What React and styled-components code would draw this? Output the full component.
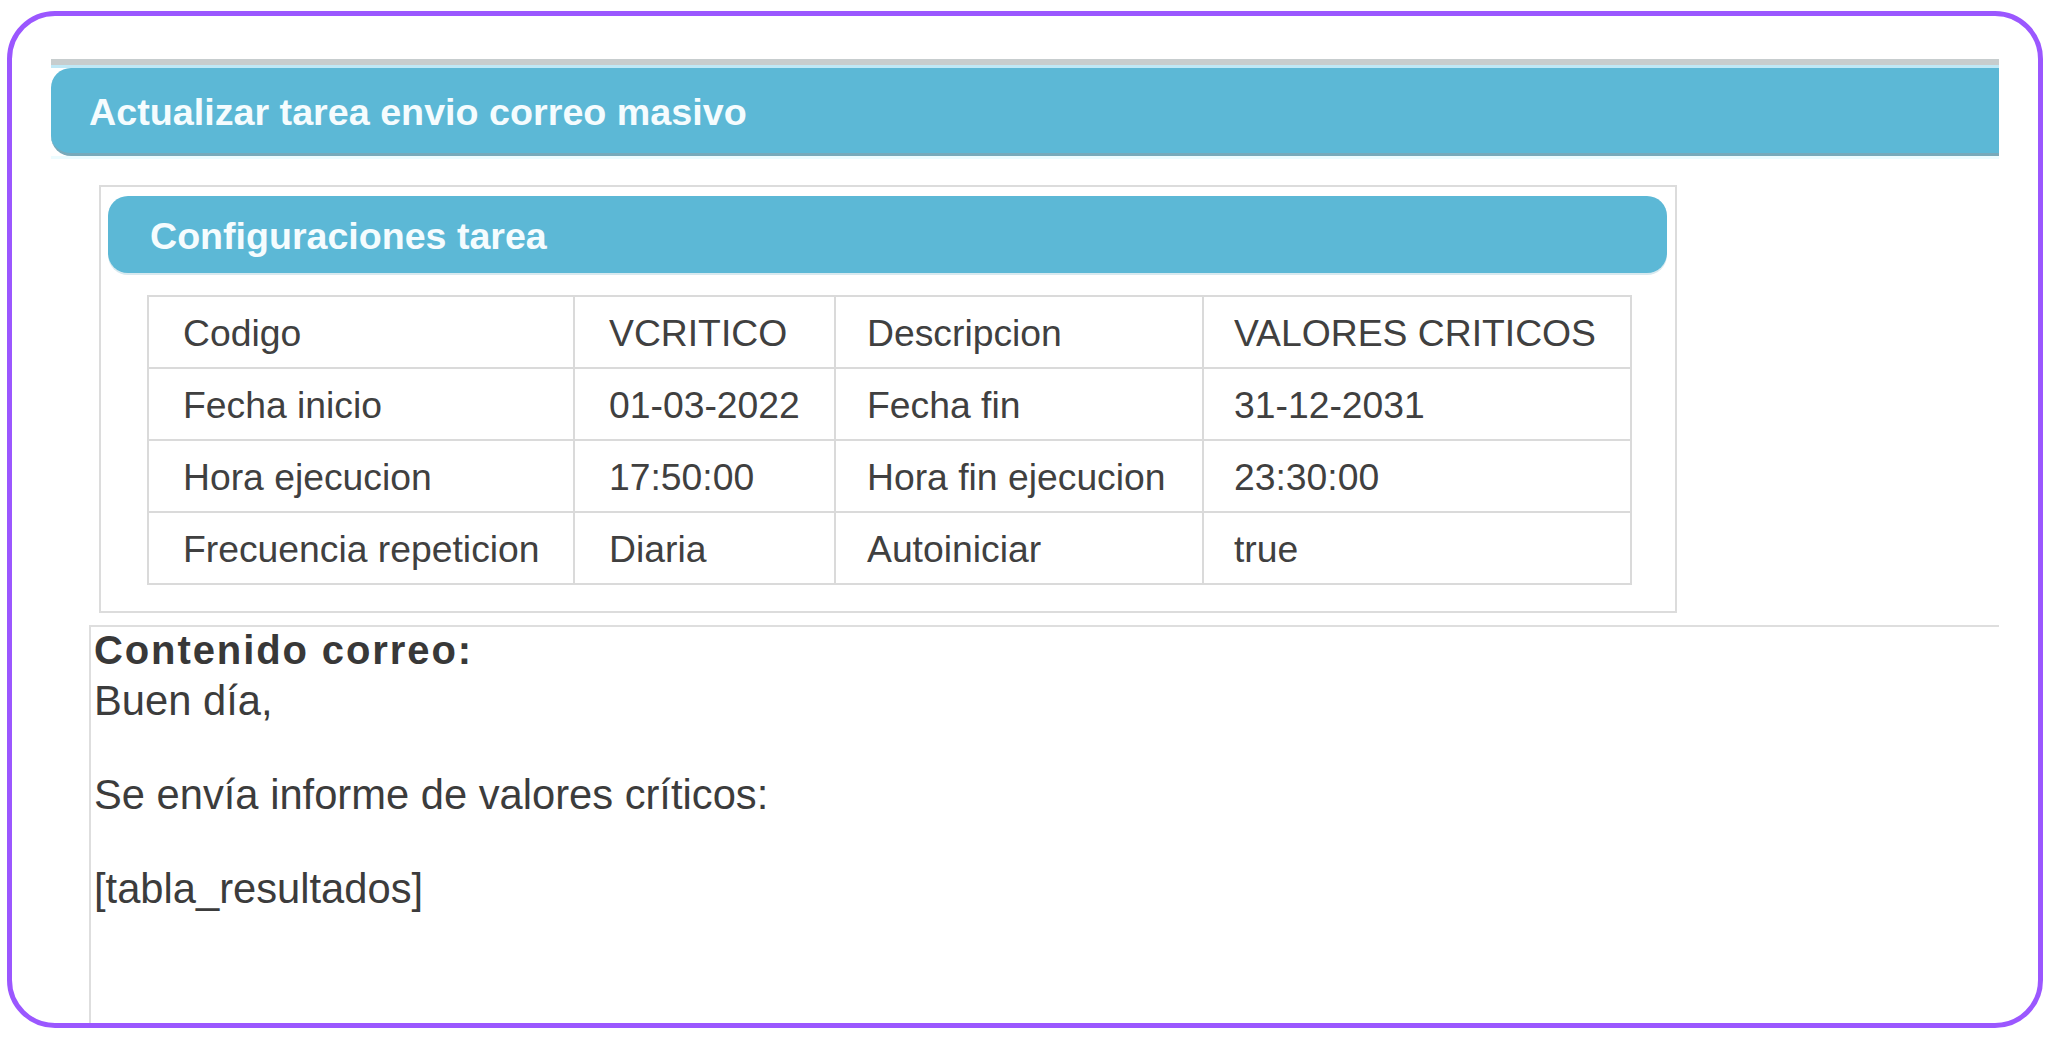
import React from "react";
import styled, { createGlobalStyle } from "styled-components";

const GlobalStyle = createGlobalStyle`
  html, body {
    margin: 0;
    padding: 0;
    background: #ffffff;
  }
  body {
    font-family: "Liberation Sans", Arial, sans-serif;
  }
  * { box-sizing: border-box; }
`;

const Frame = styled.div`
  margin: 11px 0 0 7px;
  width: 2036px;
  height: 1017px;
  border: 5px solid #9b57ff;
  border-radius: 48px;
  overflow: hidden;
  background: #fff;
  padding: 43px 39px 0 39px;
  display: flex;
  flex-direction: column;
`;

const HeaderWrap = styled.div`
  border-top: 6px solid #c7cdce;
  box-shadow: 0 3px 0 #ecfcff;
`;

const HeaderGlow = styled.div`
  height: 3px;
  background: #bfe8f6;
`;

const Header = styled.div`
  height: 88px;
  background: #5cb8d6;
  border-bottom: 3px solid #78a9ba;
  border-radius: 20px 0 0 20px;
  display: flex;
  align-items: center;
  padding-left: 38px;
  padding-top: 4px;
`;

const HeaderTitle = styled.h1`
  margin: 0;
  font-size: 37.7px;
  font-weight: bold;
  color: #f5fcfe;
`;

const Panel = styled.section`
  margin: 29px 0 0 48px;
  width: 1578px;
  border: 2px solid #dcdcdc;
  padding: 9px 8px 26px 7px;
`;

const PanelHeader = styled.div`
  height: 77px;
  background: #5cb8d6;
  border-radius: 20px;
  box-shadow: 0 2px 0 #d8e9ef;
  display: flex;
  align-items: center;
  padding-left: 42px;
  padding-top: 4px;
`;

const PanelTitle = styled.h2`
  margin: 0;
  font-size: 37.6px;
  font-weight: bold;
  color: #f5fcfe;
`;

const Grid = styled.div`
  margin: 22px 0 0 39px;
  display: grid;
  grid-template-columns: 426px 261px 368px 428px;
  width: 1485px;
  border-top: 2px solid #dadada;
  border-left: 2px solid #dadada;
`;

const Cell = styled.div`
  height: 72px;
  border-right: 2px solid #dadada;
  border-bottom: 2px solid #dadada;
  display: flex;
  align-items: center;
  padding-left: ${(p) => p.$pad}px;
  padding-top: 2px;
  font-size: 37.3px;
  color: #404040;
  white-space: nowrap;
`;

const Content = styled.section`
  flex: 1;
  margin: 12px 0 0 38px;
  border-top: 2px solid #dedede;
  border-left: 2px solid #dedede;
  padding: 1px 0 0 3px;
  color: #3c3c3c;
`;

const ContentTitle = styled.h3`
  margin: 0 0 5px 0;
  font-size: 40px;
  line-height: 44px;
  font-weight: bold;
  letter-spacing: 1.9px;
  color: #383838;
`;

const ContentBody = styled.div`
  font-size: 41.7px;
  line-height: 47px;
  white-space: pre-line;
`;

const rows = [
  ["Codigo", "VCRITICO", "Descripcion", "VALORES CRITICOS"],
  ["Fecha inicio", "01-03-2022", "Fecha fin", "31-12-2031"],
  ["Hora ejecucion", "17:50:00", "Hora fin ejecucion", "23:30:00"],
  ["Frecuencia repeticion", "Diaria", "Autoiniciar", "true"],
];

const pads = [34, 34, 31, 30];

export default function App() {
  return (
    <>
      <GlobalStyle />
      <Frame>
        <HeaderWrap>
          <HeaderGlow />
          <Header>
            <HeaderTitle>Actualizar tarea envio correo masivo</HeaderTitle>
          </Header>
        </HeaderWrap>
        <Panel>
          <PanelHeader>
            <PanelTitle>Configuraciones tarea</PanelTitle>
          </PanelHeader>
          <Grid>
            {rows.map((r, i) =>
              r.map((c, j) => (
                <Cell key={`${i}-${j}`} $pad={pads[j]}>
                  {c}
                </Cell>
              ))
            )}
          </Grid>
        </Panel>
        <Content>
          <ContentTitle>Contenido correo:</ContentTitle>
          <ContentBody>
            {"Buen día,\n\nSe envía informe de valores críticos:\n\n[tabla_resultados]"}
          </ContentBody>
        </Content>
      </Frame>
    </>
  );
}
